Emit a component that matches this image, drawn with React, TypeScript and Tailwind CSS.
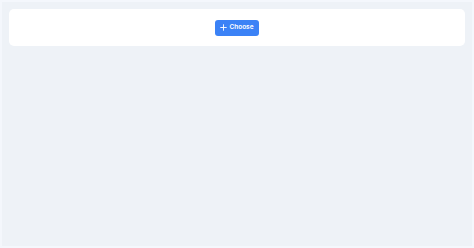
export default function App() {
  return (
    <div className="h-[248px] w-[474px] bg-[#f4f7fc] p-[2px] font-['Inter',sans-serif]">
      <div className="h-full bg-[#eef2f7] px-[7px] pt-[7px]">
        {/* Picker card */}
        <div className="flex h-[37px] items-center justify-center rounded-[5px] bg-white">
          <button
            type="button"
            className="flex h-[16px] items-center gap-[2px] rounded-[3px] bg-[#3b82f6] px-[5px] text-[6.5px] font-semibold text-white"
          >
            <svg width="7" height="7" viewBox="0 0 10 10" fill="none" stroke="currentColor" strokeWidth="1.3" strokeLinecap="round">
              <path d="M5 1v8M1 5h8" />
            </svg>
            Choose
          </button>
        </div>
      </div>
    </div>
  );
}
